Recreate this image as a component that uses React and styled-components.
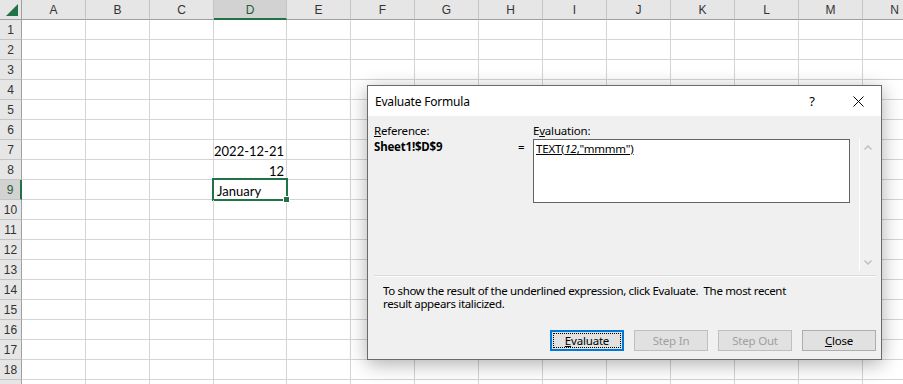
import styled, { createGlobalStyle, css } from "styled-components";

const GlobalStyle = createGlobalStyle`
  html, body {
    margin: 0;
    padding: 0;
    background: #fff;
    overflow: hidden;
  }
`;

const COLS = [
  { name: "A", w: 64 },
  { name: "B", w: 64 },
  { name: "C", w: 64 },
  { name: "D", w: 73 },
  { name: "E", w: 64 },
  { name: "F", w: 64 },
  { name: "G", w: 64 },
  { name: "H", w: 64 },
  { name: "I", w: 64 },
  { name: "J", w: 64 },
  { name: "K", w: 64 },
  { name: "L", w: 64 },
  { name: "M", w: 64 },
  { name: "N", w: 64 },
];

const DATA = {
  "D7": { text: "2022-12-21", align: "right" },
  "D8": { text: "12", align: "right" },
  "D9": { text: "January", align: "left" },
};

// row 19 only peeks in at the bottom edge
const ROWS = Array.from({ length: 19 }, (_, i) => i + 1);

const Page = styled.div`
  position: relative;
  width: 903px;
  height: 384px;
  overflow: hidden;
  background: #fff;
`;

const Sheet = styled.div`
  display: grid;
  grid-template-columns: 22px ${COLS.map((c) => c.w + "px").join(" ")};
  grid-auto-rows: 20px;
  font-family: Lato, "Liberation Sans", sans-serif;
`;

const Corner = styled.div`
  background: #e6e6e6;
  border-right: 1px solid #9f9f9f;
  border-bottom: 1px solid #9f9f9f;
  box-sizing: border-box;
  display: flex;
  align-items: flex-end;
  justify-content: flex-end;
  padding: 0 3px 3px 0;
`;

const ColHead = styled.div`
  box-sizing: border-box;
  background: ${(p) => (p.$active ? "#d2d2d2" : "#e6e6e6")};
  border-right: 1px solid #c4c4c4;
  border-bottom: ${(p) => (p.$active ? "2px solid #217346" : "1px solid #9f9f9f")};
  display: flex;
  align-items: center;
  justify-content: center;
  font-family: "Liberation Sans", sans-serif;
  font-size: 12px;
  color: ${(p) => (p.$active ? "#1d5c38" : "#333")};
  padding-top: ${(p) => (p.$active ? "1px" : "0")};
`;

const RowHead = styled.div`
  box-sizing: border-box;
  background: ${(p) => (p.$active ? "#d2d2d2" : "#e6e6e6")};
  border-right: ${(p) => (p.$active ? "2px solid #217346" : "1px solid #9f9f9f")};
  border-bottom: 1px solid #c4c4c4;
  display: flex;
  align-items: center;
  justify-content: center;
  font-family: "Liberation Sans", sans-serif;
  font-size: 12px;
  color: ${(p) => (p.$active ? "#1d5c38" : "#333")};
`;

const Cell = styled.div`
  position: relative;
  box-sizing: border-box;
  border-right: 1px solid #d4d4d4;
  border-bottom: 1px solid #d4d4d4;
  font-size: 13px;
  color: #000;
  display: flex;
  align-items: center;
  justify-content: ${(p) => (p.$align === "right" ? "flex-end" : "flex-start")};
  padding: 3px 2px 0 3px;
  white-space: nowrap;

  ${(p) =>
    p.$selected &&
    css`
      &::after {
        content: "";
        position: absolute;
        left: -2px;
        top: -2px;
        right: -2px;
        bottom: -2px;
        border: 2px solid #217346;
      }
      &::before {
        content: "";
        position: absolute;
        right: -4px;
        bottom: -4px;
        width: 5px;
        height: 5px;
        background: #217346;
        border: 1px solid #fff;
        z-index: 1;
      }
    `}
`;

const Dialog = styled.div`
  position: absolute;
  left: 367px;
  top: 85px;
  width: 515px;
  height: 275px;
  box-sizing: border-box;
  border: 1px solid #6a6a6a;
  background: #f0f0f0;
  box-shadow: 0 4px 18px rgba(0, 0, 0, 0.32);
  display: flex;
  flex-direction: column;
  font-family: "Noto Sans", "Open Sans", sans-serif;
  font-size: 11.5px;
  letter-spacing: -0.2px;
  color: #000;
`;

const TitleBar = styled.div`
  height: 30px;
  background: #fff;
  display: flex;
  align-items: center;
  padding-left: 7px;
`;

const Title = styled.div`
  flex: 1;
  font-size: 12px;
`;

const TitleButton = styled.div`
  width: 46px;
  height: 30px;
  display: flex;
  align-items: center;
  justify-content: center;
  font-size: 13px;
`;

const Body = styled.div`
  flex: 1;
  display: flex;
  flex-direction: column;
  padding: 6px 5px 0 6px;
`;

const TopGrid = styled.div`
  display: grid;
  grid-template-columns: 139px 20px 317px 9px 17px;
  grid-template-rows: 17px 132px;
`;

const Label = styled.div`
  line-height: 17px;
  grid-column: ${(p) => p.$col};
`;

const RefValue = styled.div`
  grid-column: 1;
  grid-row: 2;
  font-weight: 700;
  line-height: 16px;
`;

const Equals = styled.div`
  grid-column: 2;
  grid-row: 2;
  line-height: 16px;
  padding-left: 5px;
`;

const EvalBox = styled.div`
  grid-column: 3;
  grid-row: 2;
  height: 64px;
  box-sizing: border-box;
  border: 1px solid #646464;
  background: #fff;
  padding: 0 2px;
  line-height: 17px;
`;

const Expr = styled.span`
  text-decoration: underline;
  text-underline-offset: 1px;
`;

const Scroll = styled.div`
  grid-column: 5;
  grid-row: 2;
  border-left: 1px solid #fff;
  display: flex;
  flex-direction: column;
  justify-content: space-between;
  align-items: center;
  padding: 6px 0 6px;
`;

const Separator = styled.div`
  margin-top: 4px;
  height: 1px;
  background: #dadada;
  border-bottom: 1px solid #fbfbfb;
`;

const Description = styled.div`
  margin-top: 7px;
  padding-left: 9px;
  letter-spacing: -0.35px;
`;

const DescLine = styled.div`
  height: 13px;
  line-height: 13px;
`;

const Buttons = styled.div`
  margin-top: auto;
  margin-bottom: 8px;
  display: flex;
  justify-content: flex-end;
  gap: 10px;
`;

const Button = styled.div`
  width: 74px;
  height: 21px;
  box-sizing: border-box;
  background: #e1e1e1;
  border: ${(p) => (p.$default ? "2px" : "1px")} solid;
  border-color: ${(p) => (p.$disabled ? "#bfbfbf" : p.$default ? "#0078d7" : "#adadad")};
  color: ${(p) => (p.$disabled ? "#a0a0a0" : "#000")};
  display: flex;
  align-items: center;
  justify-content: center;
  padding: ${(p) => (p.$default ? "1px" : "0")};

  span.focus {
    flex: 1;
    align-self: stretch;
    display: flex;
    align-items: center;
    justify-content: center;
    border: 1px dotted #000;
  }
`;

function Chevron({ up }) {
  return (
    <svg width="8" height="5" viewBox="0 0 8 5">
      <path
        d={up ? "M0.5 4.5 L4 1 L7.5 4.5" : "M0.5 0.5 L4 4 L7.5 0.5"}
        fill="none"
        stroke="#bdbdbd"
        strokeWidth="1.4"
      />
    </svg>
  );
}

function CloseIcon() {
  return (
    <svg width="11" height="11" viewBox="0 0 11 11">
      <path d="M0.5 0.5 L10.5 10.5 M10.5 0.5 L0.5 10.5" stroke="#000" strokeWidth="1" />
    </svg>
  );
}

function CornerTriangle() {
  return (
    <svg width="12" height="12" viewBox="0 0 12 12">
      <polygon points="12,0 12,12 0,12" fill="#217346" />
    </svg>
  );
}

export default function App() {
  return (
    <Page>
      <GlobalStyle />
      <Sheet>
        <Corner>
          <CornerTriangle />
        </Corner>
        {COLS.map((c) => (
          <ColHead key={c.name} $active={c.name === "D"}>
            {c.name}
          </ColHead>
        ))}
        {ROWS.map((r) => [
          <RowHead key={"h" + r} $active={r === 9}>
            {r < 19 ? r : ""}
          </RowHead>,
          ...COLS.map((c) => {
            const d = DATA[c.name + r];
            return (
              <Cell key={c.name + r} $align={d ? d.align : "left"} $selected={c.name + r === "D9"}>
                {d ? d.text : ""}
              </Cell>
            );
          }),
        ])}
      </Sheet>

      <Dialog>
        <TitleBar>
          <Title>Evaluate Formula</Title>
          <TitleButton>?</TitleButton>
          <TitleButton>
            <CloseIcon />
          </TitleButton>
        </TitleBar>
        <Body>
          <TopGrid>
            <Label $col={1}>
              <u>R</u>eference:
            </Label>
            <Label $col={3}>
              E<u>v</u>aluation:
            </Label>
            <RefValue>Sheet1!$D$9</RefValue>
            <Equals>=</Equals>
            <EvalBox>
              <Expr>
                TEXT(<i>12</i>,"mmmm")
              </Expr>
            </EvalBox>
            <Scroll>
              <Chevron up />
              <Chevron />
            </Scroll>
          </TopGrid>
          <Separator />
          <Description>
            <DescLine>
              To show the result of the underlined expression, click Evaluate.&nbsp; The most recent
            </DescLine>
            <DescLine>result appears italicized.</DescLine>
          </Description>
          <Buttons>
            <Button $default>
              <span className="focus">
                <u>E</u>valuate
              </span>
            </Button>
            <Button $disabled>Step In</Button>
            <Button $disabled>Step Out</Button>
            <Button>
              <span>
                <u>C</u>lose
              </span>
            </Button>
          </Buttons>
        </Body>
      </Dialog>
    </Page>
  );
}
